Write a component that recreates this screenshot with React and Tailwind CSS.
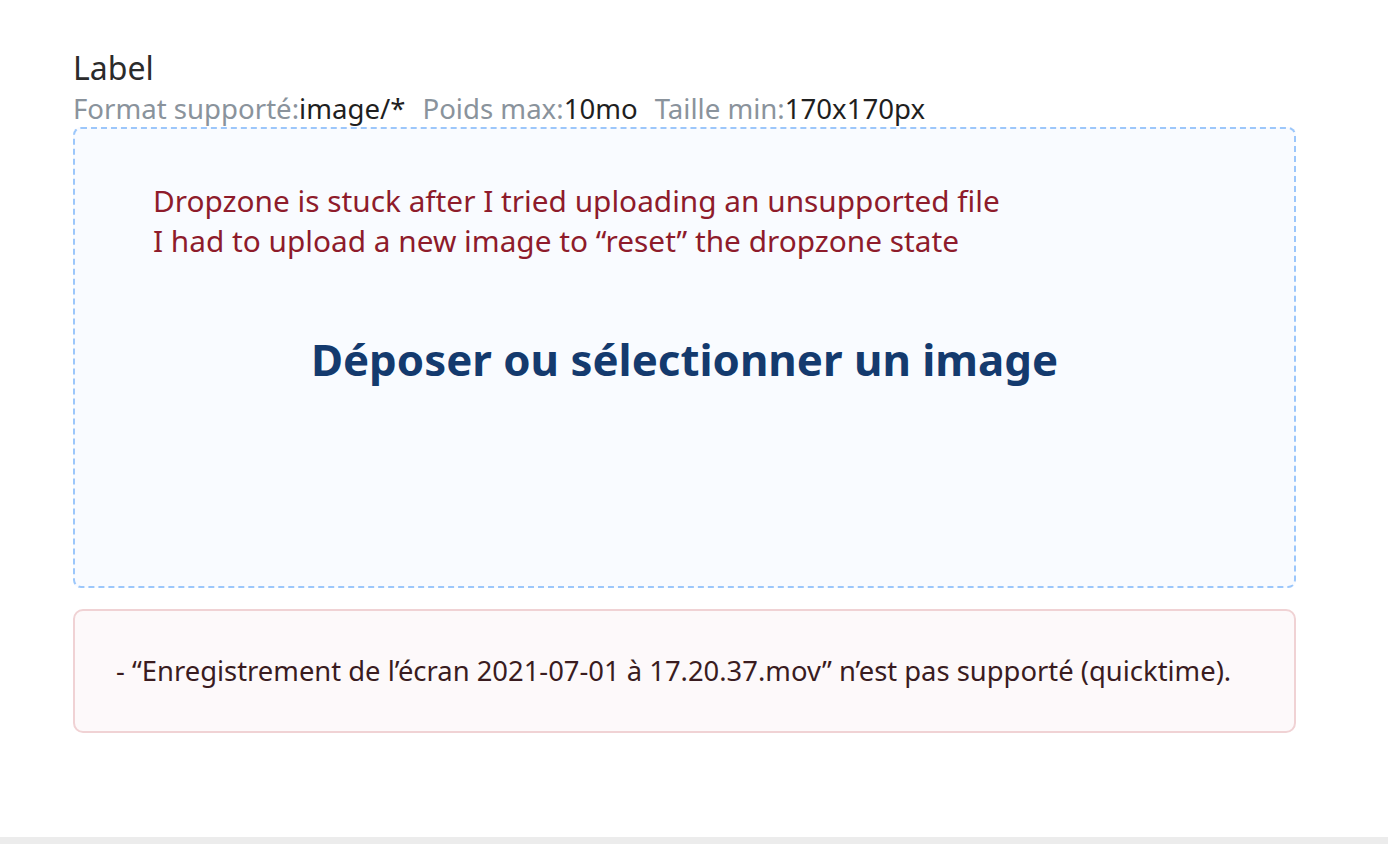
import React from "react";

export default function App() {
  return (
    <div className="flex h-[844px] w-full flex-col bg-white font-['Noto_Sans',sans-serif]">
      <div className="flex flex-1 flex-col pl-[73px] pr-[92px] pt-[48px]">
        <div className="text-[32px] leading-[40px] text-[#2b2b2b]">Label</div>
        <div className="mt-[2px] flex gap-[17px] text-[27.6px] leading-[36px] text-[#8a939c]">
          <span>
            Format supporté:<span className="text-[#1f1f1f]">image/*</span>
          </span>
          <span>
            Poids max:<span className="text-[#1f1f1f]">10mo</span>
          </span>
          <span>
            Taille min:<span className="text-[#1f1f1f]">170x170px</span>
          </span>
        </div>

        <div className="mt-[1px] flex h-[461px] flex-col rounded-[8px] border-2 border-dashed border-[#9cc7fb] bg-[#f9fbff] px-[78px] pt-[52px]">
          <div className="text-[29.8px] leading-[40px] text-[#8e1b2b]">
            <div>Dropzone is stuck after I tried uploading an unsupported file</div>
            <div>I had to upload a new image to “reset” the dropzone state</div>
          </div>
          <div className="mt-[70px] text-center text-[43.8px] font-bold leading-[56px] text-[#143a6e]">
            Déposer ou sélectionner un image
          </div>
        </div>

        <div className="mt-[21px] flex h-[124px] items-center rounded-[10px] border-2 border-[#f0d2d4] bg-[#fdf9fa] px-[41px]">
          <div className="text-[27.4px] leading-[36px] text-[#3a1c1f]">
            - “Enregistrement de l’écran 2021-07-01 à 17.20.37.mov” n’est pas supporté (quicktime).
          </div>
        </div>
      </div>
      <div className="h-[7px] w-full bg-[#ececec]" />
    </div>
  );
}
